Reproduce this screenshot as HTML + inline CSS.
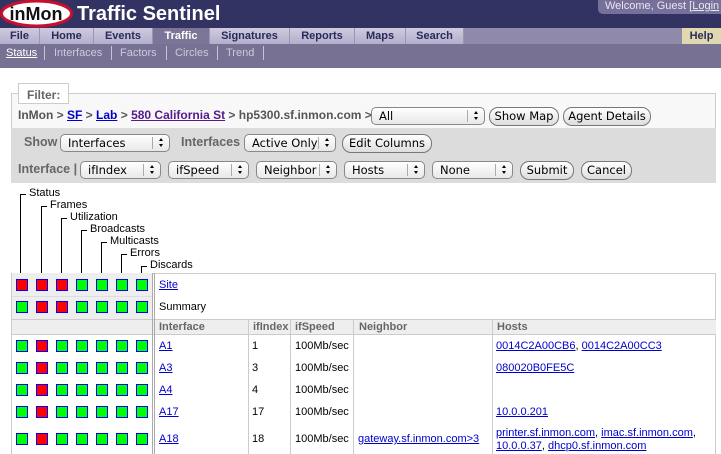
<!DOCTYPE html>
<html><head><meta charset="utf-8"><style>
*{margin:0;padding:0;box-sizing:border-box}
body{width:721px;height:454px;overflow:hidden;background:#fff;font-family:"Liberation Sans",Arial,sans-serif;font-size:11px;color:#000;position:relative}
.a{position:absolute;white-space:nowrap}
a{color:#00c;text-decoration:underline}
.hdr{left:0;top:0;width:721px;height:28px;background:#333363}
.menu{left:0;top:28px;width:721px;height:16px;background:#908aaa}
.tab{position:absolute;top:0;height:16px;background:linear-gradient(#cfcbe0,#b3aecb);color:#2a2a5a;font-weight:bold;font-size:11px;text-align:center;line-height:16px;border-right:1px solid #9a96b4}
.sub{left:0;top:44px;width:721px;height:24px;background:#777194}
.si{position:absolute;top:47px;color:#cdc9dc;font-size:11px}
.sep{position:absolute;top:46px;width:1px;height:14px;background:#c8c4d8}
.sel{position:absolute;height:18px;border:1px solid #888;border-radius:5px;background:linear-gradient(#fff,#e8e8e8);font-family:"DejaVu Sans",sans-serif;font-size:11.5px;line-height:16px;padding-left:7px}
.sel:after{content:"";position:absolute;right:16px;top:2px;bottom:2px;width:1px;background:#aaa}
.sel b{position:absolute;right:5px;top:3px;width:5px;height:10px}
.sel b:before{content:"";position:absolute;left:0;top:0;border-left:2.5px solid transparent;border-right:2.5px solid transparent;border-bottom:3px solid #000}
.sel b:after{content:"";position:absolute;left:0;top:6px;border-left:2.5px solid transparent;border-right:2.5px solid transparent;border-top:3px solid #000}
.btn{position:absolute;height:19px;border:1px solid #777;border-radius:9px;background:linear-gradient(#fff,#ddd);font-family:"DejaVu Sans",sans-serif;font-size:11.5px;line-height:17px;text-align:center}
.lbl{position:absolute;color:#666;font-weight:bold;font-size:12.5px}
.sq{position:absolute;width:12px;height:12px;border:1px solid #00f}
.r{background:#f00}.g{background:#0f0}
.vl{position:absolute;width:1px;background:#000}
.hl{position:absolute;height:1px;background:#000;width:6px}
.tl{position:absolute;font-size:11px}
.hline{position:absolute;height:1px;background:#ccc}
.vline{position:absolute;width:1px;background:#ccc}
.th{position:absolute;top:321px;color:#666;font-weight:bold;font-size:11px}
</style></head><body>
<div class="a hdr"></div>
<svg class="a" style="left:0;top:0" width="74" height="28"><ellipse cx="36.5" cy="13.5" rx="35" ry="12.5" fill="#fff" stroke="#c8102e" stroke-width="3"/><text x="36" y="20" text-anchor="middle" font-family="Liberation Sans" font-weight="bold" font-size="18" fill="#111">inMon</text></svg>
<div class="a" style="left:77px;top:3px;color:#fff;font-weight:bold;font-size:20px">Traffic Sentinel</div>
<div class="a" style="left:598px;top:0;width:123px;height:14px;background:#77709a;border-bottom-left-radius:5px;color:#e8e8f0;font-size:11px;line-height:13px;padding-left:7px">Welcome, Guest [<u>Login</u></div>
<div class="a menu">
<div class="tab" style="left:0;width:40px">File</div>
<div class="tab" style="left:40px;width:54px">Home</div>
<div class="tab" style="left:94px;width:59px">Events</div>
<div class="tab" style="left:153px;width:57px;background:#7b7598;color:#fff">Traffic</div>
<div class="tab" style="left:210px;width:80px">Signatures</div>
<div class="tab" style="left:290px;width:65px">Reports</div>
<div class="tab" style="left:355px;width:51px">Maps</div>
<div class="tab" style="left:406px;width:58px">Search</div>
<div class="tab" style="left:682px;width:39px;background:#e0d9b0;border:0">Help</div>
</div>
<div class="a sub"></div>
<div class="si" style="left:6px;color:#fff;text-decoration:underline">Status</div>
<div class="sep" style="left:44px"></div>
<div class="si" style="left:54px">Interfaces</div>
<div class="sep" style="left:111px"></div>
<div class="si" style="left:120px">Factors</div>
<div class="sep" style="left:166px"></div>
<div class="si" style="left:175px">Circles</div>
<div class="sep" style="left:217px"></div>
<div class="si" style="left:226px">Trend</div>
<div class="sep" style="left:263px"></div>

<div class="a" style="left:11px;top:93px;width:705px;height:90px;border:1px solid #ccc;background:#f8f8f8"></div>
<div class="a" style="left:18px;top:83px;width:51px;height:21px;border:1px solid #ccc;background:#fff;color:#666;font-weight:bold;font-size:12px;padding:4px 0 0 8px">Filter:</div>
<div class="a" style="left:18px;top:108px;color:#555;font-weight:bold;font-size:12px">InMon &gt; <a href="#">SF</a> &gt; <a href="#">Lab</a> &gt; <a href="#" style="color:#551a8b">580 California St</a> &gt; hp5300.sf.inmon.com &gt;</div>
<div class="sel" style="left:371px;top:107px;width:114px">All<b></b></div>
<div class="btn" style="left:489px;top:107px;width:70px">Show Map</div>
<div class="btn" style="left:563px;top:107px;width:88px">Agent Details</div>
<div class="a" style="left:11px;top:128px;width:705px;height:55px;background:#dcdcdc"></div>
<div class="lbl" style="left:24px;top:135px">Show</div>
<div class="sel" style="left:60px;top:134px;width:110px">Interfaces<b></b></div>
<div class="lbl" style="left:181px;top:135px">Interfaces</div>
<div class="sel" style="left:244px;top:134px;width:92px">Active Only<b></b></div>
<div class="btn" style="left:342px;top:134px;width:90px">Edit Columns</div>
<div class="lbl" style="left:18px;top:162px">Interface |</div>
<div class="sel" style="left:80px;top:161px;width:81px">ifIndex<b></b></div>
<div class="sel" style="left:168px;top:161px;width:81px">ifSpeed<b></b></div>
<div class="sel" style="left:256px;top:161px;width:81px">Neighbor<b></b></div>
<div class="sel" style="left:344px;top:161px;width:81px">Hosts<b></b></div>
<div class="sel" style="left:432px;top:161px;width:81px">None<b></b></div>
<div class="btn" style="left:520px;top:161px;width:54px">Submit</div>
<div class="btn" style="left:581px;top:161px;width:51px">Cancel</div>

<div class="vl" style="left:20px;top:194px;height:79px"></div><div class="hl" style="left:20px;top:194px"></div><div class="tl" style="left:29px;top:187px">Status</div>
<div class="vl" style="left:41px;top:206px;height:67px"></div><div class="hl" style="left:41px;top:206px"></div><div class="tl" style="left:50px;top:199px">Frames</div>
<div class="vl" style="left:61px;top:218px;height:55px"></div><div class="hl" style="left:61px;top:218px"></div><div class="tl" style="left:70px;top:211px">Utilization</div>
<div class="vl" style="left:81px;top:230px;height:43px"></div><div class="hl" style="left:81px;top:230px"></div><div class="tl" style="left:90px;top:223px">Broadcasts</div>
<div class="vl" style="left:101px;top:242px;height:31px"></div><div class="hl" style="left:101px;top:242px"></div><div class="tl" style="left:110px;top:235px">Multicasts</div>
<div class="vl" style="left:121px;top:254px;height:19px"></div><div class="hl" style="left:121px;top:254px"></div><div class="tl" style="left:130px;top:247px">Errors</div>
<div class="vl" style="left:141px;top:266px;height:7px"></div><div class="hl" style="left:141px;top:266px"></div><div class="tl" style="left:150px;top:259px">Discards</div>

<div class="a" style="left:11px;top:273px;width:705px;height:181px;border-top:1px solid #ccc;border-right:1px solid #ccc"></div>
<div class="a" style="left:11px;top:273px;width:142px;height:62px;background:#eee"></div>
<div class="a" style="left:153px;top:319px;width:563px;height:16px;background:#eee"></div>
<div class="hline" style="left:11px;top:296px;width:142px;background:#ddd"></div>
<div class="hline" style="left:11px;top:319px;width:705px"></div>
<div class="hline" style="left:11px;top:334px;width:705px"></div>
<div class="vline" style="left:11px;top:273px;height:181px"></div>
<div class="vline" style="left:152px;top:273px;height:181px;background:#aaa"></div>
<div class="vline" style="left:154px;top:273px;height:181px;background:#aaa"></div>
<div class="vline" style="left:248px;top:319px;height:135px"></div>
<div class="vline" style="left:290px;top:319px;height:135px"></div>
<div class="vline" style="left:353px;top:319px;height:135px"></div>
<div class="vline" style="left:492px;top:319px;height:135px"></div>

<div class="th" style="left:159px">Interface</div>
<div class="th" style="left:253px">ifIndex</div>
<div class="th" style="left:295px">ifSpeed</div>
<div class="th" style="left:359px">Neighbor</div>
<div class="th" style="left:497px">Hosts</div>

<div class="tl" style="left:159px;top:279px"><a href="#">Site</a></div>
<div class="tl" style="left:159px;top:301px">Summary</div>

<div class="tl" style="left:159px;top:340px"><a href="#">A1</a></div><div class="tl" style="left:252px;top:340px">1</div><div class="tl" style="left:295px;top:340px">100Mb/sec</div>
<div class="tl" style="left:496px;top:340px"><a href="#">0014C2A00CB6</a>, <a href="#">0014C2A00CC3</a></div>
<div class="tl" style="left:159px;top:362px"><a href="#">A3</a></div><div class="tl" style="left:252px;top:362px">3</div><div class="tl" style="left:295px;top:362px">100Mb/sec</div>
<div class="tl" style="left:496px;top:362px"><a href="#">080020B0FE5C</a></div>
<div class="tl" style="left:159px;top:384px"><a href="#">A4</a></div><div class="tl" style="left:252px;top:384px">4</div><div class="tl" style="left:295px;top:384px">100Mb/sec</div>
<div class="tl" style="left:159px;top:406px"><a href="#">A17</a></div><div class="tl" style="left:252px;top:406px">17</div><div class="tl" style="left:295px;top:406px">100Mb/sec</div>
<div class="tl" style="left:496px;top:406px"><a href="#">10.0.0.201</a></div>
<div class="tl" style="left:159px;top:433px"><a href="#">A18</a></div><div class="tl" style="left:252px;top:433px">18</div><div class="tl" style="left:295px;top:433px">100Mb/sec</div>
<div class="tl" style="left:358px;top:433px"><a href="#">gateway.sf.inmon.com&gt;3</a></div>
<div class="tl" style="left:496px;top:427px;line-height:13px"><a href="#">printer.sf.inmon.com</a>, <a href="#">imac.sf.inmon.com</a>,<br><a href="#">10.0.0.37</a>, <a href="#">dhcp0.sf.inmon.com</a></div>

<div class="sq r" style="left:16px;top:279px"></div><div class="sq r" style="left:36px;top:279px"></div><div class="sq r" style="left:56px;top:279px"></div><div class="sq g" style="left:76px;top:279px"></div><div class="sq g" style="left:96px;top:279px"></div><div class="sq g" style="left:116px;top:279px"></div><div class="sq g" style="left:136px;top:279px"></div>
<div class="sq g" style="left:16px;top:301px"></div><div class="sq r" style="left:36px;top:301px"></div><div class="sq r" style="left:56px;top:301px"></div><div class="sq g" style="left:76px;top:301px"></div><div class="sq g" style="left:96px;top:301px"></div><div class="sq g" style="left:116px;top:301px"></div><div class="sq g" style="left:136px;top:301px"></div>
<div class="sq g" style="left:16px;top:340px"></div><div class="sq r" style="left:36px;top:340px"></div><div class="sq g" style="left:56px;top:340px"></div><div class="sq g" style="left:76px;top:340px"></div><div class="sq g" style="left:96px;top:340px"></div><div class="sq g" style="left:116px;top:340px"></div><div class="sq g" style="left:136px;top:340px"></div>
<div class="sq g" style="left:16px;top:362px"></div><div class="sq r" style="left:36px;top:362px"></div><div class="sq g" style="left:56px;top:362px"></div><div class="sq g" style="left:76px;top:362px"></div><div class="sq g" style="left:96px;top:362px"></div><div class="sq g" style="left:116px;top:362px"></div><div class="sq g" style="left:136px;top:362px"></div>
<div class="sq g" style="left:16px;top:384px"></div><div class="sq r" style="left:36px;top:384px"></div><div class="sq g" style="left:56px;top:384px"></div><div class="sq g" style="left:76px;top:384px"></div><div class="sq g" style="left:96px;top:384px"></div><div class="sq g" style="left:116px;top:384px"></div><div class="sq g" style="left:136px;top:384px"></div>
<div class="sq g" style="left:16px;top:406px"></div><div class="sq r" style="left:36px;top:406px"></div><div class="sq g" style="left:56px;top:406px"></div><div class="sq g" style="left:76px;top:406px"></div><div class="sq g" style="left:96px;top:406px"></div><div class="sq g" style="left:116px;top:406px"></div><div class="sq g" style="left:136px;top:406px"></div>
<div class="sq g" style="left:16px;top:433px"></div><div class="sq r" style="left:36px;top:433px"></div><div class="sq g" style="left:56px;top:433px"></div><div class="sq g" style="left:76px;top:433px"></div><div class="sq g" style="left:96px;top:433px"></div><div class="sq g" style="left:116px;top:433px"></div><div class="sq g" style="left:136px;top:433px"></div>
</body></html>
